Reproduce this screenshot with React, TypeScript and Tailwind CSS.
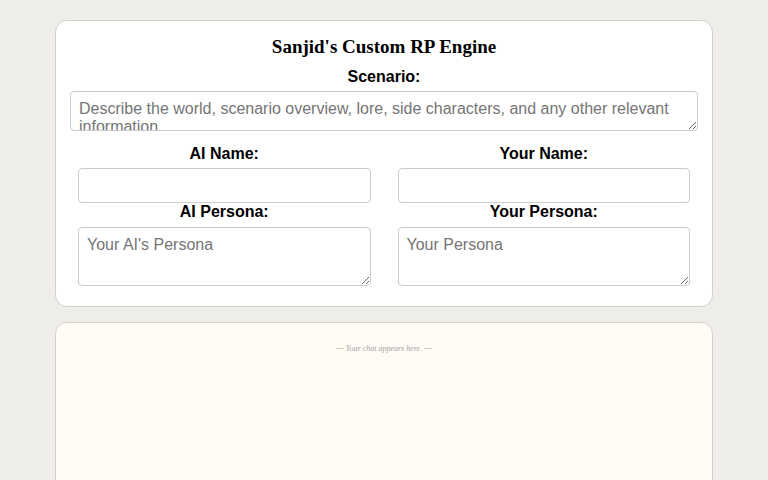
export default function App() {
  return (
    <div className="min-h-screen bg-[#efede9] pt-5 pb-5 font-['Liberation_Sans',Arial,sans-serif]">
      {/* Setup card */}
      <div className="mx-auto w-[658px] bg-white border border-[#d4d1ca] rounded-xl px-[14px] pt-[15px] pb-[20px]">
        <h1 className="text-center font-['Liberation_Serif',serif] font-bold text-[19px] leading-[22px] text-black">
          Sanjid's Custom RP Engine
        </h1>
        <label className="block text-center font-bold text-base leading-[18px] mt-[10px] text-black">
          Scenario:
        </label>
        <textarea
          className="block w-full mt-[5px] h-[40px] border border-[#ccc] rounded-[4px] px-2 py-2 text-base leading-[18px] text-black placeholder:text-[#757575] resize-y outline-none"
          placeholder="Describe the world, scenario overview, lore, side characters, and any other relevant information"
        />

        <div className="grid grid-cols-2 gap-x-[27px] px-2 mt-[14px]">
          <div className="flex flex-col">
            <label className="text-center font-bold text-base leading-[18px] text-black">AI Name:</label>
            <input className="mt-[5px] h-[35px] border border-[#ccc] rounded-[4px] px-2 text-base outline-none" />
            <label className="text-center font-bold text-base leading-[18px] text-black">AI Persona:</label>
            <textarea
              className="mt-[6px] h-[59px] border border-[#ccc] rounded-[4px] px-2 py-2 text-base leading-[18px] placeholder:text-[#757575] resize-y outline-none"
              placeholder="Your AI's Persona"
            />
          </div>
          <div className="flex flex-col">
            <label className="text-center font-bold text-base leading-[18px] text-black">Your Name:</label>
            <input className="mt-[5px] h-[35px] border border-[#ccc] rounded-[4px] px-2 text-base outline-none" />
            <label className="text-center font-bold text-base leading-[18px] text-black">Your Persona:</label>
            <textarea
              className="mt-[6px] h-[59px] border border-[#ccc] rounded-[4px] px-2 py-2 text-base leading-[18px] placeholder:text-[#757575] resize-y outline-none"
              placeholder="Your Persona"
            />
          </div>
        </div>
      </div>

      {/* Chat area */}
      <div className="mx-auto mt-[15px] w-[658px] h-[300px] bg-[#fffcf5] border border-[#d4d1ca] rounded-xl pt-[21px]">
        <p className="text-center font-['Liberation_Serif',serif] italic text-[8px] leading-[10px] text-[#a3a3a3]">
          --- Your chat appears here. ---
        </p>
      </div>
    </div>
  )
}
